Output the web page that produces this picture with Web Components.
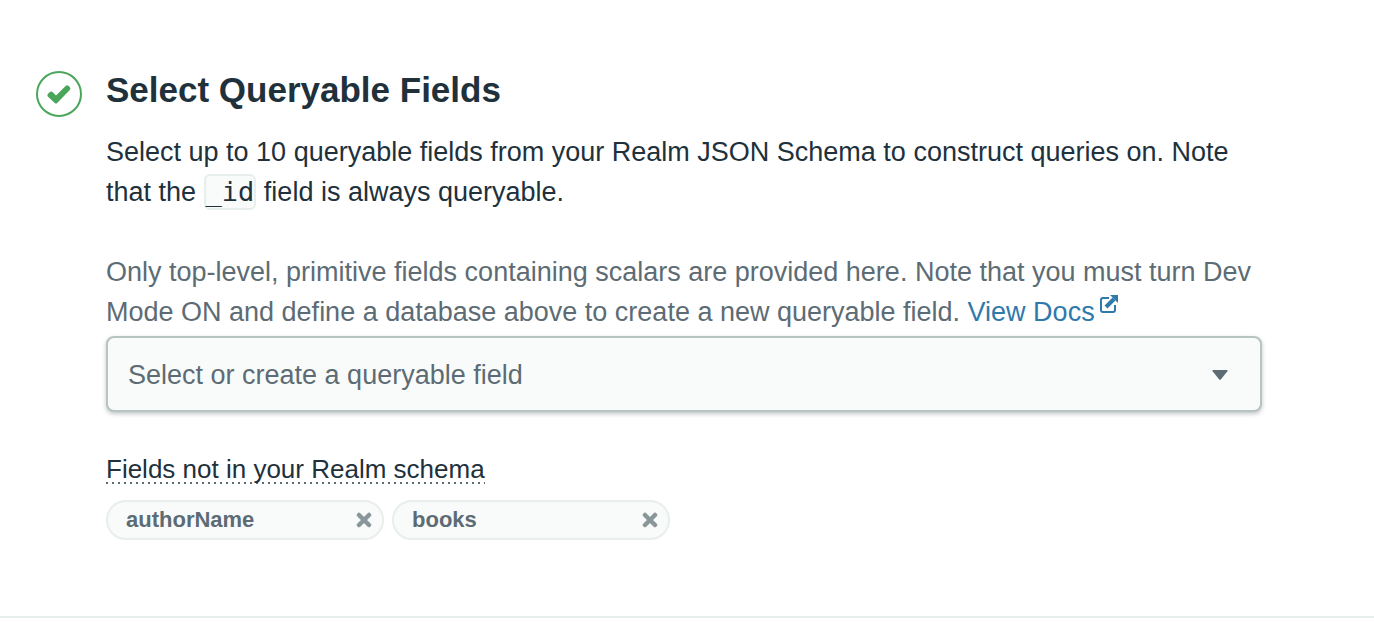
<!DOCTYPE html>
<html lang="en">
<head>
<meta charset="utf-8">
<title>Select Queryable Fields</title>
<style>
body{margin:0;background:#fff;color:#21313c;font-family:"Liberation Sans",Arial,sans-serif;font-size:27px;line-height:40px}
</style>
</head>
<body>
<setup-step>
  <span slot="title">Select Queryable Fields</span>
  <p-text>Select up to 10 queryable fields from your Realm JSON Schema to construct queries on. Note that the <code-chip>_id</code-chip> field is always queryable.</p-text>
  <field-picker placeholder="Select or create a queryable field">Only top-level, primitive fields containing scalars are provided here. Note that you must turn Dev Mode ON and define a database above to create a new queryable field. <doc-link href="#docs">View Docs</doc-link></field-picker>
  <field-group>
    <span slot="label">Fields not in your Realm schema</span>
    <field-tag>authorName</field-tag>
    <field-tag>books</field-tag>
  </field-group>
</setup-step>
<script>
const define = (name, html, setup) => {
  const template = document.createElement('template');
  template.innerHTML = html;
  customElements.define(name, class extends HTMLElement {
    constructor() {
      super();
      this.attachShadow({ mode: 'open' }).append(template.content.cloneNode(true));
    }
    connectedCallback() { if (setup) setup(this, this.shadowRoot); }
  });
};

define('setup-step', `
<style>
:host{display:block;padding:68px 112px 76px 36px;border-bottom:2px solid #e7eeec}
section{display:flex;gap:24px;align-items:flex-start}
.mark{flex:none;width:46px;height:46px;margin-top:3px}
.body{flex:1;min-width:0}
h2{margin:0 0 20px;font-size:35px;line-height:44px;font-weight:700}
</style>
<section>
  <svg class="mark" viewBox="0 0 46 46" role="img" aria-label="Complete"><circle cx="23" cy="23" r="22" fill="none" stroke="#4ba65c" stroke-width="2"/><path d="M12 22.800l1.600-1.600q1.600-1.500 3.200 0l3.200 3.300 9.600-9.600q1.500-1.400 3 0l1.200 1.200q1.400 1.500 0 3L21.200 32q-1.200 1.200-2.400 0L12 25.800q-1.400-1.500 0-3z" fill="#4ba65c"/></svg>
  <div class="body"><h2><slot name="title"></slot></h2><slot></slot></div>
</section>`);

define('p-text', `<style>:host{display:block;margin-bottom:40px}p{margin:0}</style><p><slot></slot></p>`);

define('code-chip', `
<style>
:host{display:inline}
code{padding:0 0 1px;border:2px solid #e7eeec;border-radius:6px;background:#f9fbfa;font-family:"DejaVu Sans Mono",monospace;font-size:27px;line-height:32px}
</style><code><slot></slot></code>`);

define('doc-link', `
<style>
:host{display:inline}
a{color:#2f79ab;text-decoration:none;white-space:nowrap}
svg{width:18px;height:18px;margin-left:5px;vertical-align:top;margin-top:3px}
</style><a><slot></slot><svg viewBox="0 0 18 18" fill="none" stroke="currentColor" stroke-width="2" aria-hidden="true"><path d="M9 3H3Q1 3 1 5V15Q1 17 3 17H13Q15 17 15 15V10"/><path d="M6 12L14 4" stroke-width="4"/><path d="M10 0H18V8Z" fill="currentColor" stroke="none"/></svg></a>`,
(el, root) => { root.querySelector('a').href = el.getAttribute('href'); });

define('field-picker', `
<style>
:host{display:block;color:#5d6c74;margin-bottom:40px}
label{display:block;margin-bottom:4px}
.box{display:grid;align-items:center}
select,svg{grid-area:1/1}
select{appearance:none;width:100%;height:76px;margin:0;padding:2px 60px 0 20px;border:2px solid #b8c4c2;border-radius:8px;background:#f9fbfa;box-shadow:0 2px 4px rgba(6,22,33,.25);color:inherit;font:inherit}
svg{justify-self:end;width:16px;height:10px;margin:2px 34px 0 0;pointer-events:none}
</style>
<label for="field"><slot></slot></label>
<div class="box"><select id="field"><option></option></select><svg viewBox="0 0 16 10" aria-hidden="true"><path d="M1 0H15Q16 .4 15.400 1.300L8.800 9.500Q8 10.200 7.200 9.500L.6 1.300Q0 .4 1 0Z" fill="#5d6c74"/></svg></div>`,
(el, root) => { root.querySelector('option').textContent = el.getAttribute('placeholder'); });

define('field-group', `
<style>
:host{display:block}
.label{width:fit-content;font-size:26px;line-height:34px;margin-bottom:14px;background:linear-gradient(90deg,#5d6c74 2px,transparent 2px) left bottom 2px/6px 2px repeat-x}
.tags{display:flex;flex-wrap:wrap;gap:8px}
</style>
<div class="label"><slot name="label"></slot></div><div class="tags"><slot></slot></div>`);

define('field-tag', `
<style>
:host{display:flex;box-sizing:border-box;width:278px;height:40px;align-items:center;justify-content:space-between;padding:0 10px 0 18px;border:2px solid #e7eeec;border-radius:20px;background:#f9fbfa;color:#5d6c74;font-size:22px;font-weight:700;line-height:36px}
button{display:flex;padding:0;border:0;background:none;color:#89979b}
svg{width:16px;height:16px}
</style>
<slot></slot><button type="button" aria-label="Remove field"><svg viewBox="0 0 16 16" stroke="currentColor" stroke-width="4.500" stroke-linecap="round" aria-hidden="true"><path d="M3 3L13 13M13 3L3 13"/></svg></button>`);
</script>
</body>
</html>
